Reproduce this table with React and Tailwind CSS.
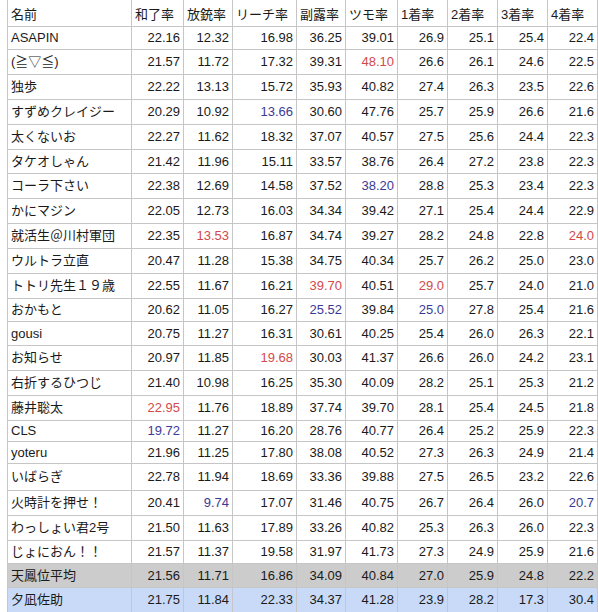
const HEADERS = ['名前', '和了率', '放銃率', 'リーチ率', '副露率', 'ツモ率', '1着率', '2着率', '3着率', '4着率'];

// r = red (top), b = blue (bottom)
const ROWS = [
  ['ASAPIN', '22.16', '12.32', '16.98', '36.25', '39.01', '26.9', '25.1', '25.4', '22.4'],
  ['(≧▽≦)', '21.57', '11.72', '17.32', '39.31', '48.10r', '26.6', '26.1', '24.6', '22.5'],
  ['独歩', '22.22', '13.13', '15.72', '35.93', '40.82', '27.4', '26.3', '23.5', '22.6'],
  ['すずめクレイジー', '20.29', '10.92', '13.66b', '30.60', '47.76', '25.7', '25.9', '26.6', '21.6'],
  ['太くないお', '22.27', '11.62', '18.32', '37.07', '40.57', '27.5', '25.6', '24.4', '22.3'],
  ['タケオしゃん', '21.42', '11.96', '15.11', '33.57', '38.76', '26.4', '27.2', '23.8', '22.3'],
  ['コーラ下さい', '22.38', '12.69', '14.58', '37.52', '38.20b', '28.8', '25.3', '23.4', '22.3'],
  ['かにマジン', '22.05', '12.73', '16.03', '34.34', '39.42', '27.1', '25.4', '24.4', '22.9'],
  ['就活生＠川村軍団', '22.35', '13.53r', '16.87', '34.74', '39.27', '28.2', '24.8', '22.8', '24.0r'],
  ['ウルトラ立直', '20.47', '11.28', '15.38', '34.75', '40.34', '25.7', '26.2', '25.0', '23.0'],
  ['トトリ先生１９歳', '22.55', '11.67', '16.21', '39.70r', '40.51', '29.0r', '25.7', '24.0', '21.0'],
  ['おかもと', '20.62', '11.05', '16.27', '25.52b', '39.84', '25.0b', '27.8', '25.4', '21.6'],
  ['gousi', '20.75', '11.27', '16.31', '30.61', '40.25', '25.4', '26.0', '26.3', '22.1'],
  ['お知らせ', '20.97', '11.85', '19.68r', '30.03', '41.37', '26.6', '26.0', '24.2', '23.1'],
  ['右折するひつじ', '21.40', '10.98', '16.25', '35.30', '40.09', '28.2', '25.1', '25.3', '21.2'],
  ['藤井聡太', '22.95r', '11.76', '18.89', '37.74', '39.70', '28.1', '25.4', '24.5', '21.8'],
  ['CLS', '19.72b', '11.27', '16.20', '28.76', '40.77', '26.4', '25.2', '25.9', '22.3'],
  ['yoteru', '21.96', '11.25', '17.80', '38.08', '40.52', '27.3', '26.3', '24.9', '21.4'],
  ['いばらぎ', '22.78', '11.94', '18.69', '33.36', '39.88', '27.5', '26.5', '23.2', '22.6'],
  ['火時計を押せ！', '20.41', '9.74b', '17.07', '31.46', '40.75', '26.7', '26.4', '26.0', '20.7b'],
  ['わっしょい君2号', '21.50', '11.63', '17.89', '33.26', '40.82', '25.3', '26.3', '26.0', '22.3'],
  ['じょにおん！！', '21.57', '11.37', '19.58', '31.97', '41.73', '27.3', '24.9', '25.9', '21.6'],
  ['天鳳位平均', '21.56', '11.71', '16.86', '34.09', '40.84', '27.0', '25.9', '24.8', '22.2'],
  ['夕凪佐助', '21.75', '11.84', '22.33', '34.37', '41.28', '23.9', '28.2', '17.3', '30.4'],
];

const HEIGHTS = ['h-[23px]', 'h-[25px]', 'h-[25px]', 'h-[25px]', 'h-[25px]', 'h-[24px]', 'h-[25px]', 'h-[25px]', 'h-[25px]', 'h-[25px]', 'h-[25px]', 'h-[23px]', 'h-[24px]', 'h-[25px]', 'h-[25px]', 'h-[25px]', 'h-[21px]', 'h-[22px]', 'h-[27px]', 'h-[25px]', 'h-[25px]', 'h-[23px]', 'h-[24px]', 'h-[25px]'];

const cols = 'grid grid-cols-[124px_52px_49px_64px_49px_52px_50px_50px_50px_50px]';

function Cell({ value, first }) {
  if (first) {
    return (
      <div className="flex items-center px-[3px] border-r border-[#c6c6c6] whitespace-nowrap overflow-hidden">
        {value}
      </div>
    );
  }
  const flag = value.slice(-1);
  const num = flag === 'r' || flag === 'b' ? value.slice(0, -1) : value;
  const color = flag === 'r' ? 'text-[#d24a4a]' : flag === 'b' ? 'text-[#3b3b95]' : '';
  return (
    <div className={`flex items-center justify-end pr-[3px] border-r border-[#c6c6c6] ${color}`}>
      {num}
    </div>
  );
}

export default function App() {
  return (
    <div className="w-[598px] h-[612px] bg-white overflow-hidden text-[13px] text-[#1a1a1a] font-['Liberation_Sans','Noto_Sans_CJK_JP',sans-serif]">
      <div className="ml-[7px] w-[591px] border-l border-[#c6c6c6]">
        <div className={`${cols} h-[27px] border-b border-[#c6c6c6]`}>
          {HEADERS.map((h) => (
            <div key={h} className="flex items-center pt-[4px] px-[3px] border-r border-[#c6c6c6] whitespace-nowrap">
              {h}
            </div>
          ))}
        </div>
        {ROWS.map((row, i) => {
          const bg = i === 22 ? 'bg-[#cccccc]' : i === 23 ? 'bg-[#c9daf8]' : '';
          return (
            <div key={row[0]} className={`${cols} ${HEIGHTS[i]} ${bg} border-b border-[#c6c6c6]`}>
              {row.map((v, j) => (
                <Cell key={j} value={v} first={j === 0} />
              ))}
            </div>
          );
        })}
      </div>
    </div>
  );
}
